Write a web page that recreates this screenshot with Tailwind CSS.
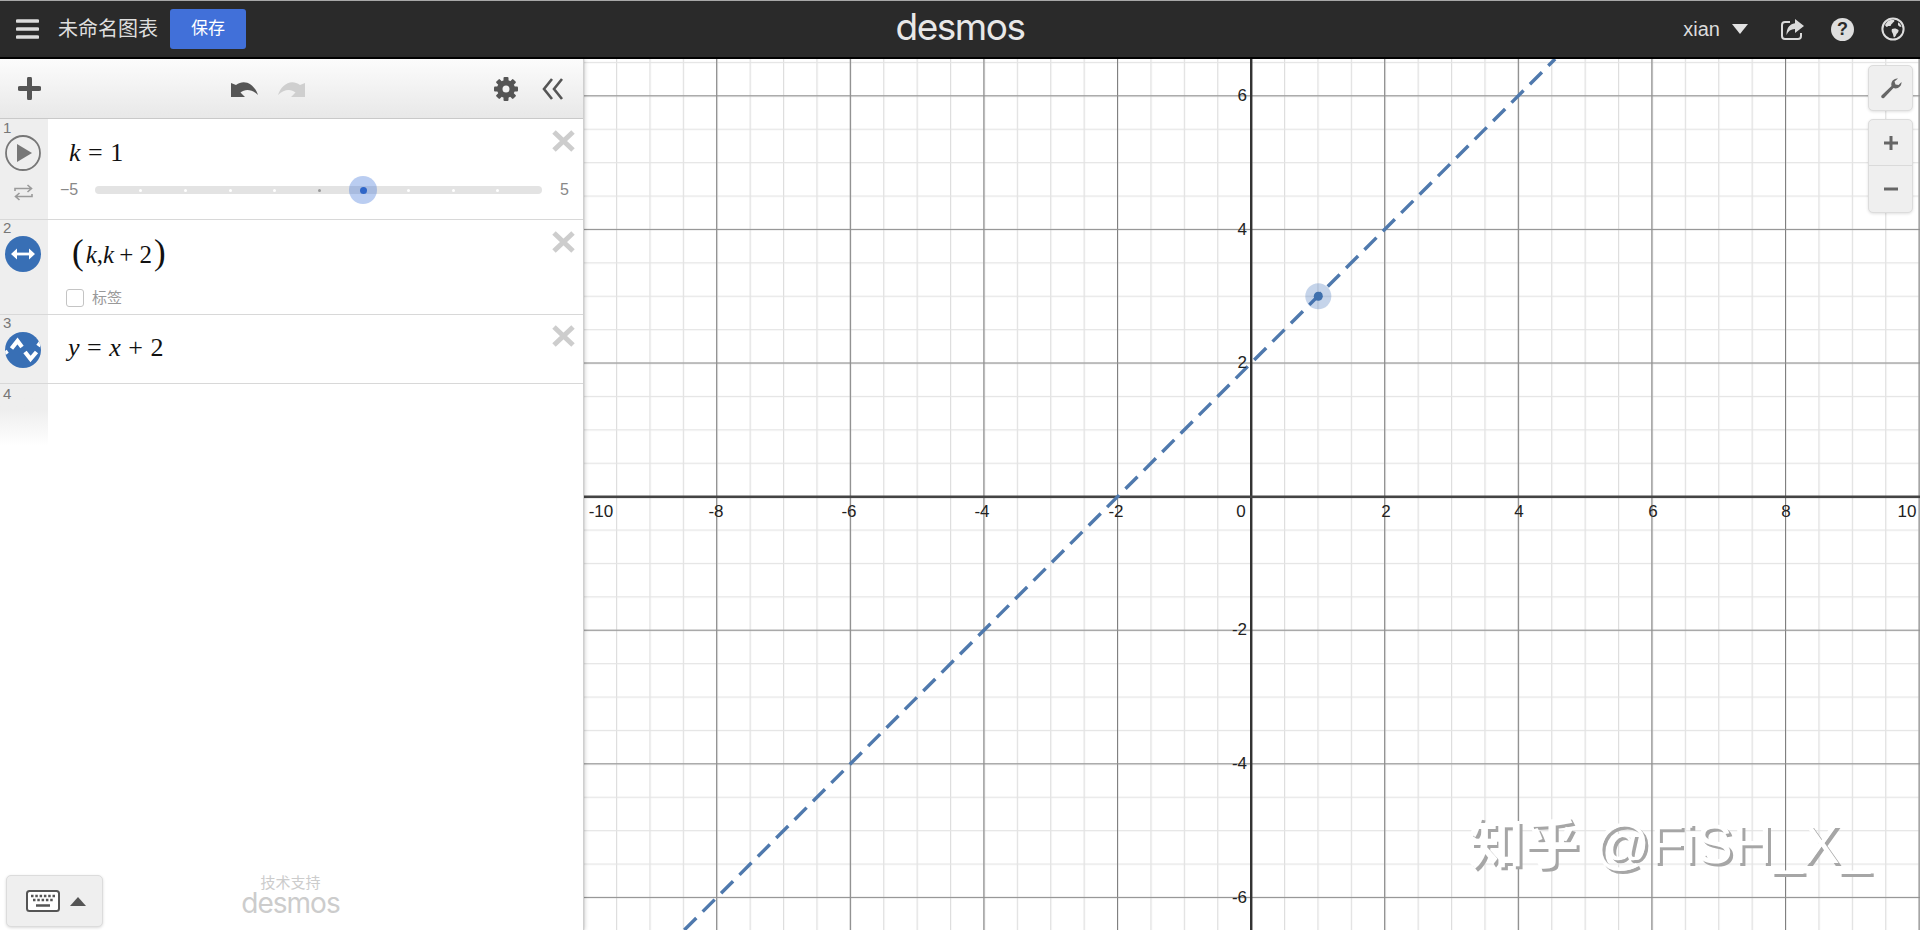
<!doctype html>
<html lang="zh">
<head>
<meta charset="utf-8">
<script src="https://cdn.jsdelivr.net/npm/@tailwindcss/browser@4"></script>
<title>desmos</title>
</head>
<body class="bg-white overflow-hidden font-['Liberation_Sans','Noto_Sans_CJK_SC',sans-serif]">
<div class="flex flex-col w-[1920px] h-[930px] overflow-hidden">
  <!-- Header -->
  <header class="h-[59px] shrink-0 grid grid-cols-[1fr_auto_1fr] items-center bg-[#2a2a2a] border-t border-t-[#a8a8a8] border-b-2 border-b-black text-[#e4e4e4]">
    <div class="flex items-center pl-[16px]">
      <svg class="w-[23px] h-[20px]" viewBox="0 0 23 20"><path d="M1.5 2h20M1.5 10h20M1.5 18h20" stroke="#dcdcdc" stroke-width="3.6" stroke-linecap="round"/></svg>
      <span class="ml-[19px] text-[20px] leading-none text-[#dedede]">未命名图表</span>
      <button class="ml-[12px] w-[76px] h-[40px] rounded-[3px] bg-[#4170d9] text-white text-[17px]">保存</button>
    </div>
    <div class="font-['Inter',sans-serif] font-normal text-[37px] leading-none -mt-[5px] text-[#e8e8e8] tracking-[-1.5px]">desmos</div>
    <div class="flex items-center justify-end">
      <span class="text-[20px] text-[#dcdcdc] leading-none -mt-[1px]">xian</span>
      <svg class="ml-[12px] w-[16px] h-[10px]" viewBox="0 0 16 10"><path d="M0 0H16L8 10Z" fill="#e2e2e2"/></svg>
      <svg class="ml-[33px] w-[24px] h-[21px]" viewBox="0 0 24 21" fill="none"><path d="M9 3H4a3 3 0 0 0-3 3v11a3 3 0 0 0 3 3h13a3 3 0 0 0 3-3v-3" stroke="#dadada" stroke-width="2"/><path d="M14 0l9 7-9 7V10C10 10 7 12 5.500 16 5.500 10 8 5 14 4.300Z" fill="#dadada"/></svg>
      <span class="ml-[26px] w-[23px] h-[23px] rounded-full bg-[#dedede] text-[#2a2a2a] text-[18px] font-bold leading-[23px] text-center">?</span>
      <svg class="ml-[27px] mr-[15px] w-[24px] h-[24px]" viewBox="0 0 24 24" fill="none"><circle cx="12" cy="12" r="10.600" stroke="#dedede" stroke-width="2"/><path d="M6 5c2-2 5-2.500 7-2 1 1 0 2-1 2.500-1 1.500-2 1.500-2 3-1 1-3 0-3.500 1C6 11 4.500 9 4 8ZM11 12c2-1 5-.5 6.500 1 .5 1.500-1 3-2 4-.5 2-1.500 3-2.500 3.500-1-1.500-.5-3-1.500-4.500-1-1-1-3-.5-4ZM17 5.500c1 0 3 2 3.500 4.500-1.500 0-3-1-3.500-2Z" fill="#dedede"/></svg>
    </div>
  </header>

  <div class="flex flex-1 min-h-0">
    <!-- Expression list -->
    <aside class="w-[584px] shrink-0 flex flex-col border-r border-[#cfcfcf] bg-white shadow-[1px_0_4px_rgba(0,0,0,0.18)] z-10">
      <div class="h-[60px] shrink-0 flex items-center border-b border-[#c9c9c9] bg-gradient-to-b from-[#fcfcfc] to-[#e8e8e8]">
        <svg class="ml-[18px] w-[23px] h-[23px]" viewBox="0 0 23 23"><path d="M11.500 2v19M2 11.500h19" stroke="#555" stroke-width="5" stroke-linecap="round"/></svg>
        <svg class="ml-[190px] w-[28px] h-[20px]" viewBox="0 0 28 20"><path d="M0 4V18H14L9.500 13.500C14 9.500 21 10 27 16 24 6 14 -1 5 6Z" fill="#555"/></svg>
        <svg class="ml-[18px] w-[28px] h-[20px]" viewBox="0 0 28 20"><path d="M28 4V18H14L18.500 13.500C14 9.500 7 10 1 16 4 6 14 -1 23 6Z" fill="#cfcfcf"/></svg>
        <svg class="ml-[189px] w-[24px] h-[24px]" viewBox="0 0 24 24"><g fill="#555"><rect x="9.500" y="0" width="5" height="24" rx="1"/><rect x="9.500" y="0" width="5" height="24" rx="1" transform="rotate(45 12 12)"/><rect x="9.500" y="0" width="5" height="24" rx="1" transform="rotate(90 12 12)"/><rect x="9.500" y="0" width="5" height="24" rx="1" transform="rotate(135 12 12)"/></g><circle cx="12" cy="12" r="6.500" fill="none" stroke="#555" stroke-width="5"/><circle cx="12" cy="12" r="3.500" fill="#f2f2f2"/></svg>
        <svg class="ml-[24px] w-[22px] h-[22px]" viewBox="0 0 22 22" fill="none"><path d="M10 1L2 11l8 10M20 1l-8 10 8 10" stroke="#555" stroke-width="2.600"/></svg>
      </div>

      <!-- Row 1 -->
      <div class="relative h-[101px] shrink-0 flex border-b border-[#d8d8d8]">
        <div class="w-[48px] shrink-0 bg-[#eeeeee] flex flex-col">
          <span class="pl-[3px] text-[15px] leading-[14px] text-[#777] mt-[2px]">1</span>
          <svg class="ml-[5px] w-[36px] h-[36px]" viewBox="0 0 36 36"><circle cx="18" cy="18" r="17" fill="none" stroke="#777" stroke-width="1.800"/><path d="M12 9l15 9-15 9Z" fill="#777"/></svg>
          <svg class="ml-[14px] mt-[13px] w-[19px] h-[17px]" viewBox="0 0 19 17" fill="none" stroke="#9a9a9a" stroke-width="1.600"><path d="M1 7V4.500h16M13.500 1L17.500 4.500 13.500 8M18 10v2.500H2M5.500 9L1.500 12.500 5.500 16"/></svg>
        </div>
        <div class="flex-1 flex flex-col">
          <div class="ml-[21px] mt-[20px] h-[28px] font-['Liberation_Serif',serif] text-[26px] leading-[28px] text-[#111] [word-spacing:1px]"><i>k</i> = 1</div>
          <div class="flex items-center mt-[9px] h-[28px] text-[16px] text-[#888]">
            <span class="ml-[12px] w-[35px]">−5</span>
            <div class="relative w-[447px] h-[8px] rounded-full bg-[#e3e3e3] flex items-center">
              <span class="absolute left-[44px] w-[3px] h-[3px] rounded-full bg-white"></span>
              <span class="absolute left-[89px] w-[3px] h-[3px] rounded-full bg-white"></span>
              <span class="absolute left-[134px] w-[3px] h-[3px] rounded-full bg-white"></span>
              <span class="absolute left-[178px] w-[3px] h-[3px] rounded-full bg-white"></span>
              <span class="absolute left-[223px] w-[3px] h-[3px] rounded-full bg-[#999]"></span>
              <span class="absolute left-[312px] w-[3px] h-[3px] rounded-full bg-white"></span>
              <span class="absolute left-[357px] w-[3px] h-[3px] rounded-full bg-white"></span>
              <span class="absolute left-[401px] w-[3px] h-[3px] rounded-full bg-white"></span>
              <span class="absolute left-[254px] w-[28px] h-[28px] rounded-full bg-[#3a6fd8]/35 flex items-center justify-center"><span class="w-[7px] h-[7px] rounded-full bg-[#2f66c8]"></span></span>
            </div>
            <span class="ml-[18px]">5</span>
          </div>
        </div>
        <svg class="absolute left-[552px] top-[11px] w-[23px] h-[22px]" viewBox="0 0 23 22"><path d="M2 2l19 18M21 2L2 20" stroke="#cdcdcd" stroke-width="5"/></svg>
      </div>

      <!-- Row 2 -->
      <div class="relative h-[95px] shrink-0 flex border-b border-[#d8d8d8]">
        <div class="w-[48px] shrink-0 bg-[#eeeeee] flex flex-col">
          <span class="pl-[3px] text-[15px] leading-[14px] text-[#777] mt-[1px]">2</span>
          <svg class="ml-[5px] mt-[1px] w-[36px] h-[36px]" viewBox="0 0 36 36"><circle cx="18" cy="18" r="18" fill="#386fb5"/><path d="M10 18h16" stroke="#fff" stroke-width="2.800"/><path d="M6 18l6-5.500v11ZM30 18l-6-5.500v11Z" fill="#fff"/></svg>
        </div>
        <div class="flex-1 flex flex-col">
          <div class="ml-[24px] mt-[16px] h-[36px] flex items-center font-['Liberation_Serif',serif] text-[25px] leading-none text-[#111]"><span class="text-[35px] font-thin -mt-[4px] mr-[2px]">(</span><i>k</i>,<i>k</i><span class="ml-[5px]">+ 2</span><span class="text-[35px] font-thin -mt-[4px] ml-[2px]">)</span></div>
          <div class="flex items-center mt-[17px] ml-[18px]">
            <span class="w-[18px] h-[18px] rounded-[3px] border border-[#c4c4c4] bg-white"></span>
            <span class="ml-[8px] text-[15px] leading-[18px] text-[#999]">标签</span>
          </div>
        </div>
        <svg class="absolute left-[552px] top-[11px] w-[23px] h-[22px]" viewBox="0 0 23 22"><path d="M2 2l19 18M21 2L2 20" stroke="#cdcdcd" stroke-width="5"/></svg>
      </div>

      <!-- Row 3 -->
      <div class="relative h-[69px] shrink-0 flex border-b border-[#d8d8d8]">
        <div class="w-[48px] shrink-0 bg-[#eeeeee] flex flex-col">
          <span class="pl-[3px] text-[15px] leading-[14px] text-[#777] mt-[1px]">3</span>
          <svg class="ml-[5px] mt-[2px] w-[36px] h-[36px]" viewBox="0 0 36 36"><defs><clipPath id="c"><circle cx="18" cy="18" r="18"/></clipPath></defs><circle cx="18" cy="18" r="18" fill="#386fb5"/><g clip-path="url(#c)" fill="none" stroke="#fff" stroke-width="4.200"><path d="M6.500 16.500L12.500 9 17 15"/><path d="M20 20L25.500 27 31.500 20"/><path d="M0 19L2 22"/><path d="M33 14L36 10"/></g></svg>
        </div>
        <div class="flex-1">
          <div class="ml-[20px] mt-[19px] h-[28px] font-['Liberation_Serif',serif] text-[26px] leading-[28px] text-[#111] [word-spacing:1px]"><i>y</i> = <i>x</i> + 2</div>
        </div>
        <svg class="absolute left-[552px] top-[10px] w-[23px] h-[22px]" viewBox="0 0 23 22"><path d="M2 2l19 18M21 2L2 20" stroke="#cdcdcd" stroke-width="5"/></svg>
      </div>

      <!-- Row 4 -->
      <div class="h-[62px] shrink-0 flex">
        <div class="w-[48px] shrink-0 bg-gradient-to-b from-[#eeeeee] from-40% to-white">
          <span class="block pl-[3px] text-[15px] leading-[14px] text-[#777] mt-[3px]">4</span>
        </div>
      </div>

      <!-- Footer -->
      <div class="mt-auto mb-[3px] flex items-end">
        <div class="ml-[6px] w-[97px] h-[52px] rounded-[5px] border border-[#dcdcdc] bg-[#efefef] shadow-[0_1px_3px_rgba(0,0,0,0.15)] flex items-center">
          <svg class="ml-[19px] w-[34px] h-[22px]" viewBox="0 0 34 22"><rect x="1" y="1" width="32" height="20" rx="2.500" fill="#fff" stroke="#555" stroke-width="2"/><path d="M5 6h24M7 10h20" stroke="#555" stroke-width="2.500" stroke-dasharray="2.500 1.800"/><path d="M10 15.500h14" stroke="#555" stroke-width="2.500"/></svg>
          <svg class="ml-[10px] w-[16px] h-[9px]" viewBox="0 0 16 9"><path d="M8 0l8 9H0Z" fill="#555"/></svg>
        </div>
        <div class="ml-[138px] w-[99px] flex flex-col items-center mb-[12px]">
          <span class="text-[15px] leading-[17px] text-[#cccccc]">技术支持</span>
          <span class="font-['Inter',sans-serif] font-normal text-[28px] leading-[24px] text-[#cccccc] tracking-[-1px]">desmos</span>
        </div>
      </div>
    </aside>

    <!-- Graph -->
    <main class="relative flex-1 min-w-0 bg-white overflow-hidden">
      <svg class="block" width="1336" height="871" viewBox="0 0 1336 871">
        <defs>
          <pattern id="minor" x="666.6" y="437.1" width="33.4" height="33.4" patternUnits="userSpaceOnUse">
            <rect width="1.2" height="33.4" fill="#dedede"/><rect width="33.4" height="1.2" fill="#e4e4e4"/>
          </pattern>
          <pattern id="major" x="666.600" y="437.100" width="133.6" height="133.6" patternUnits="userSpaceOnUse">
            <rect width="1.1" height="133.6" fill="#808080"/><rect width="133.6" height="1.1" fill="#909090"/>
          </pattern>
        </defs>
        <rect width="1336" height="871" fill="url(#minor)"/>
        <rect width="1336" height="871" fill="url(#major)"/>
        <rect x="666" y="0" width="2.4" height="871" fill="#333"/>
        <rect x="0" y="436.500" width="1336" height="2.600" fill="#444"/>
        <line x1="100.300" y1="871" x2="971.100" y2="0" stroke="#4f79ad" stroke-width="3.400" stroke-dasharray="17 9"/>
        <circle cx="734.300" cy="237.200" r="13" fill="#2d66b3" fill-opacity="0.28"/>
        <circle cx="734.300" cy="237.200" r="4.500" fill="#3f70ad"/>
        <g font-family="Liberation Sans, sans-serif" font-size="17" fill="#222" text-anchor="middle">
          <text x="17" y="458">-10</text><text x="132" y="458">-8</text><text x="265" y="458">-6</text><text x="398" y="458">-4</text><text x="532" y="458">-2</text>
          <text x="657" y="458">0</text><text x="802" y="458">2</text><text x="935" y="458">4</text><text x="1069" y="458">6</text><text x="1202" y="458">8</text><text x="1323" y="458">10</text>
        </g>
        <g font-family="Liberation Sans, sans-serif" font-size="17" fill="#222" text-anchor="end">
          <text x="663" y="42">6</text><text x="663" y="176">4</text><text x="663" y="309">2</text>
          <text x="663" y="576">-2</text><text x="663" y="710">-4</text><text x="663" y="844">-6</text>
        </g>
      </svg>

      <!-- Graph controls -->
      <div class="absolute left-[1284px] top-[6px] flex flex-col gap-[8px]">
        <div class="w-[45px] h-[46px] rounded-[5px] border border-[#dcdcdc] bg-[#efefef] shadow-[0_1px_3px_rgba(0,0,0,0.12)] flex items-center justify-center">
          <svg class="w-[22px] h-[22px]" viewBox="0 0 22 22"><path d="M1.500 18.500L11.500 9C10.500 5 13.500 1 18 1.500L14.500 4.500 15.500 7.500 18.500 8 21.500 5C21.800 9.500 17.500 12.500 13.500 11L4 21C2 22 .5 20 1.500 18.500Z" fill="#666"/></svg>
        </div>
        <div class="w-[45px] h-[94px] rounded-[5px] border border-[#dcdcdc] bg-[#efefef] shadow-[0_1px_3px_rgba(0,0,0,0.12)] flex flex-col">
          <div class="h-[46px] flex items-center justify-center border-b border-[#dadada]">
            <svg class="w-[16px] h-[16px]" viewBox="0 0 16 16"><path d="M8 1v14M1 8h14" stroke="#666" stroke-width="3"/></svg>
          </div>
          <div class="flex-1 flex items-center justify-center">
            <svg class="w-[16px] h-[16px]" viewBox="0 0 16 16"><path d="M1 8h14" stroke="#666" stroke-width="3"/></svg>
          </div>
        </div>
      </div>

      <!-- Watermark -->
      <div class="absolute left-[885px] top-[758px] whitespace-nowrap text-white leading-none text-[55px] [text-shadow:3px_3px_0_#a6a6a6]"><span class="font-bold">知乎</span> @FiSH_X_</div>
    </main>
  </div>
</div>
</body>
</html>
